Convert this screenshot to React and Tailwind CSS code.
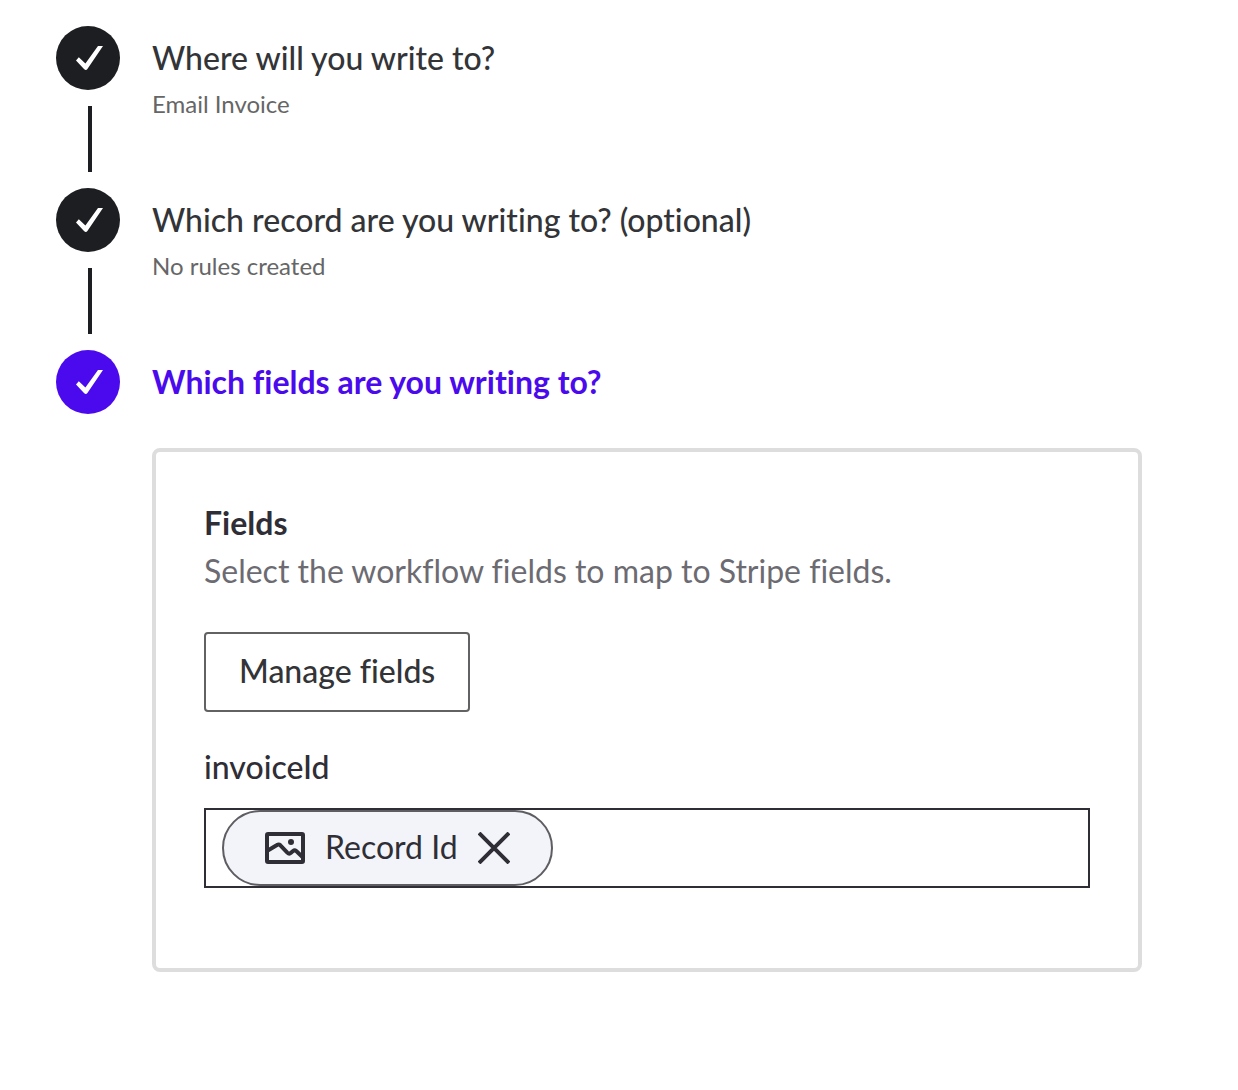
import React, { useState } from 'react';

const doneSteps = [
  { title: 'Where will you write to?', note: 'Email Invoice' },
  { title: 'Which record are you writing to? (optional)', note: 'No rules created' },
];

function CheckIcon() {
  return (
    <svg width="64" height="64" viewBox="0 0 64 64" aria-hidden="true">
      <path d="M20 34.5L22.8 31.3L29.4 37.6L42 20H47L31.4 43Q30 44.8 28 43Z" fill="#fff" />
    </svg>
  );
}

function ImageIcon() {
  return (
    <svg width="40" height="32" viewBox="0 0 40 32" fill="none" aria-hidden="true">
      <rect x="2" y="2" width="36" height="28" rx="1" stroke="#2f2e36" strokeWidth="4" />
      <path
        d="M2 19L12 13Q13.8 11.8 15.4 13.3L22.3 20.6Q24.2 22.4 26 20.8L28 19Q29.6 17.8 31.3 19.1L38.5 26"
        stroke="#2f2e36"
        strokeWidth="4"
      />
      <circle cx="26" cy="10" r="3" fill="#2f2e36" />
    </svg>
  );
}

function CloseIcon() {
  return (
    <svg width="32" height="32" viewBox="0 0 32 32" fill="none" aria-hidden="true">
      <path d="M1 1L31 31M31 1L1 31" stroke="#2f2e36" strokeWidth="4" />
    </svg>
  );
}

export default function App() {
  const [mapped, setMapped] = useState(true);
  const [value, setValue] = useState('');

  return (
    <main className="bg-white pt-[26px] pb-28 pl-14 pr-24 font-['Lato',sans-serif] [font-variant-ligatures:none]">
      <ol>
        {doneSteps.map(step => (
          <li key={step.title} className="flex gap-8">
            <div className="flex w-16 shrink-0 flex-col items-center">
              <div className="h-16 w-16 rounded-full bg-[#1d1e22]">
                <CheckIcon />
              </div>
              <div className="my-4 ml-1 h-[66px] w-1 bg-[#1d1e22]" />
            </div>
            <div>
              <h2 className="text-[32px] leading-[64px] font-medium text-[#333437]">{step.title}</h2>
              <p className="text-2xl leading-7 text-[#666666]">{step.note}</p>
            </div>
          </li>
        ))}

        <li className="flex gap-8">
          <div className="h-16 w-16 shrink-0 rounded-full bg-[#4a0aed]">
            <CheckIcon />
          </div>
          <div className="min-w-0 flex-1">
            <h2 className="text-[32px] leading-[64px] font-bold text-[#4a0aed]">Which fields are you writing to?</h2>

            <section className="mt-[34px] rounded-lg border-4 border-[#dddddd] px-12 pt-[47px] pb-20">
              <h3 className="text-[32px] leading-[48px] font-bold text-[#2f2e36]">Fields</h3>
              <p className="text-[32px] leading-[48px] text-[#6c6b72]">
                Select the workflow fields to map to Stripe fields.
              </p>

              <button
                type="button"
                className="mt-[37px] flex h-20 items-center rounded-sm border-2 border-[#626264] px-[33px] pb-0.5 text-[32px] font-medium text-[#333437]"
              >
                Manage fields
              </button>

              <label htmlFor="invoiceId" className="mt-8 block text-[32px] leading-[46px] font-medium text-[#2f2e36]">
                invoiceId
              </label>
              <div className="mt-[18px] flex h-20 border-2 border-[#2f2e36] px-4">
                {mapped && (
                  <div className="flex shrink-0 items-center rounded-full border-2 border-[#5d5d62] bg-[#f3f4f9] px-[41px] text-[32px] text-[#2f2e36]">
                    <ImageIcon />
                    <span className="mx-5 pb-0.5">Record Id</span>
                    <button type="button" aria-label="Remove Record Id" onClick={() => setMapped(false)}>
                      <CloseIcon />
                    </button>
                  </div>
                )}
                <input
                  id="invoiceId"
                  type="text"
                  value={value}
                  onChange={e => setValue(e.target.value)}
                  className="min-w-0 flex-1 px-4 text-[32px] outline-none"
                />
              </div>
            </section>
          </div>
        </li>
      </ol>
    </main>
  );
}
